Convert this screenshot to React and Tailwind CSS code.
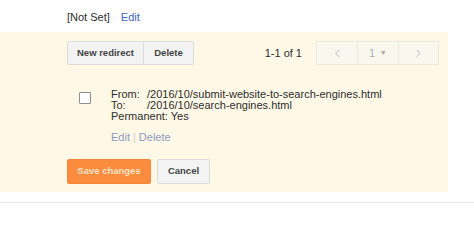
import { ChevronLeft, ChevronRight } from 'lucide-react';

const font = { fontFamily: '"Liberation Sans", Arial, sans-serif' };

function GrayButton({ children, className = '' }) {
  return (
    <button className={`h-[24px] border border-[#dcdcdc] bg-[#f3f3f3] text-[9.5px] font-bold text-[#444] ${className}`}>
      {children}
    </button>
  );
}

export default function App() {
  return (
    <div className="w-[474px] h-[211px] bg-white text-[11px] text-[#2e2e2e] overflow-hidden" style={font}>
      {/* header row */}
      <div className="h-[32px] flex items-center pl-[67px] pt-[2px]">
        <span>[Not Set]</span>
        <a className="ml-[11px] text-[#3b64c4]">Edit</a>
      </div>

      {/* redirects panel */}
      <div className="w-[448px] h-[160px] bg-[#fff8e6] pl-[67px] pt-[9px] flex flex-col">
        <div className="flex items-center pr-[9px]">
          <div className="flex">
            <GrayButton className="w-[77px] rounded-l-[2px]">New redirect</GrayButton>
            <GrayButton className="w-[51px] -ml-px rounded-r-[2px]">Delete</GrayButton>
          </div>
          <span className="ml-auto mr-[14px] leading-[24px]">1-1 of 1</span>
          <div className="flex h-[24px] w-[123px] border border-[#ece8dc] bg-[#faf7ee] text-[#aaa]">
            <div className="w-[40px] flex items-center justify-center">
              <ChevronLeft size={13} strokeWidth={1.6} />
            </div>
            <div className="w-[42px] flex items-center justify-center gap-[5px] border-x border-[#ece8dc] text-[10px]">
              <span>1</span>
              <span className="text-[7px]">▼</span>
            </div>
            <div className="flex-1 flex items-center justify-center">
              <ChevronRight size={13} strokeWidth={1.6} />
            </div>
          </div>
        </div>

        <div className="flex mt-[24px] pl-[12px] leading-[11px]">
          <div className="mt-[3px] w-[12px] h-[12px] border border-[#8f8f8f] bg-white rounded-[1px]" />
          <div className="ml-[20px]">
            <div className="flex">
              <span className="w-[36px]">From:</span>
              <span>/2016/10/submit-website-to-search-engines.html</span>
            </div>
            <div className="flex">
              <span className="w-[36px]">To:</span>
              <span>/2016/10/search-engines.html</span>
            </div>
            <div>Permanent: Yes</div>
            <div className="mt-[10px] text-[#8c9cc4]">
              <a>Edit</a>
              <span className="mx-[3px] text-[#cfcfcf]">|</span>
              <a>Delete</a>
            </div>
          </div>
        </div>

        <div className="flex gap-[6px] mt-[16px]">
          <button className="w-[84px] h-[25px] rounded-[2px] border border-[#f5863a] bg-[#fb8c3d] text-[9.5px] font-bold text-[#fde2c8]">
            Save changes
          </button>
          <GrayButton className="w-[53px] h-[25px] rounded-[2px]">Cancel</GrayButton>
        </div>
      </div>

      <div className="mt-[10px] border-t border-[#ebebeb]" />
    </div>
  );
}
